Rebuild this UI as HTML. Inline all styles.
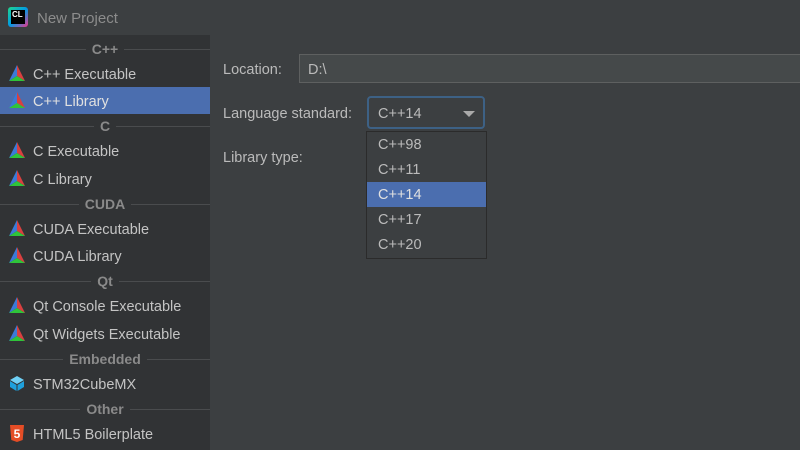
<!DOCTYPE html>
<html><head><style>
*{margin:0;padding:0;box-sizing:border-box}
body{width:800px;height:450px;background:#3c3f41;font-family:"Liberation Sans","DejaVu Sans",sans-serif;color:#bbbbbb;position:relative;overflow:hidden;font-size:14px}
.abs{position:absolute}
#side{left:0;top:35px;width:210px;height:415px;background:#313335}
.hdr{position:absolute;left:0;width:210px;height:20px;text-align:center;font-weight:bold;color:#8a8a8a;font-size:14px;line-height:22px}
.hdr:before{content:"";position:absolute;left:0;right:0;top:11px;border-top:1px solid #4a4c4e}
.hdr span{position:relative;background:#313335;padding:0 6px}
.item{position:absolute;left:0;width:210px;height:27px;line-height:30px;padding-left:33px;font-size:14.5px;color:#c4c4c4}
.item.sel{background:#4b6eaf;color:#e0e0e0}
.item svg{position:absolute;left:9px;top:5px}
.dd div{height:25px;line-height:27px;padding-left:11px}
</style></head><body>
<div class="abs" style="left:8px;top:7px;width:20px;height:20px;border-radius:3px;background:linear-gradient(135deg,#21d789,#009ae5 50%,#ed358c)"></div>
<div class="abs" style="left:11px;top:10px;width:14px;height:14px;background:#000;color:#fff;font-size:8px;font-weight:bold;line-height:9px;padding-left:1px">CL</div>
<div class="abs" style="left:37px;top:10px;font-size:15px;color:#8c8c8c">New Project</div>
<div id="side" class="abs">
<div class="hdr" style="top:3px"><span>C++</span></div>
<div class="item" style="top:25px"><svg width="16" height="17" viewBox="0 0 16 17"><path d="M8 0L0 16L8 11Z" fill="#3b7ad8"/><path d="M8 0L16 16L8 11Z" fill="#d84040"/><path d="M0 16L8 11L16 16Z" fill="#2fc43a"/></svg>C++ Executable</div>
<div class="item sel" style="top:52px"><svg width="16" height="17" viewBox="0 0 16 17"><path d="M8 0L0 16L8 11Z" fill="#3b7ad8"/><path d="M8 0L16 16L8 11Z" fill="#d84040"/><path d="M0 16L8 11L16 16Z" fill="#2fc43a"/></svg>C++ Library</div>
<div class="hdr" style="top:80px"><span>C</span></div>
<div class="item" style="top:102px"><svg width="16" height="17" viewBox="0 0 16 17"><path d="M8 0L0 16L8 11Z" fill="#3b7ad8"/><path d="M8 0L16 16L8 11Z" fill="#d84040"/><path d="M0 16L8 11L16 16Z" fill="#2fc43a"/></svg>C Executable</div>
<div class="item" style="top:130px"><svg width="16" height="17" viewBox="0 0 16 17"><path d="M8 0L0 16L8 11Z" fill="#3b7ad8"/><path d="M8 0L16 16L8 11Z" fill="#d84040"/><path d="M0 16L8 11L16 16Z" fill="#2fc43a"/></svg>C Library</div>
<div class="hdr" style="top:158px"><span>CUDA</span></div>
<div class="item" style="top:180px"><svg width="16" height="17" viewBox="0 0 16 17"><path d="M8 0L0 16L8 11Z" fill="#3b7ad8"/><path d="M8 0L16 16L8 11Z" fill="#d84040"/><path d="M0 16L8 11L16 16Z" fill="#2fc43a"/></svg>CUDA Executable</div>
<div class="item" style="top:207px"><svg width="16" height="17" viewBox="0 0 16 17"><path d="M8 0L0 16L8 11Z" fill="#3b7ad8"/><path d="M8 0L16 16L8 11Z" fill="#d84040"/><path d="M0 16L8 11L16 16Z" fill="#2fc43a"/></svg>CUDA Library</div>
<div class="hdr" style="top:235px"><span>Qt</span></div>
<div class="item" style="top:257px"><svg width="16" height="17" viewBox="0 0 16 17"><path d="M8 0L0 16L8 11Z" fill="#3b7ad8"/><path d="M8 0L16 16L8 11Z" fill="#d84040"/><path d="M0 16L8 11L16 16Z" fill="#2fc43a"/></svg>Qt Console Executable</div>
<div class="item" style="top:285px"><svg width="16" height="17" viewBox="0 0 16 17"><path d="M8 0L0 16L8 11Z" fill="#3b7ad8"/><path d="M8 0L16 16L8 11Z" fill="#d84040"/><path d="M0 16L8 11L16 16Z" fill="#2fc43a"/></svg>Qt Widgets Executable</div>
<div class="hdr" style="top:313px"><span>Embedded</span></div>
<div class="item" style="top:335px"><svg width="16" height="17" viewBox="0 0 16 17"><path d="M8 1L15 5L8 9L1 5Z" fill="#6fd0f5"/><path d="M1 6L7.5 10V16L1 12Z" fill="#1ea0dc"/><path d="M15 6L8.5 10V16L15 12Z" fill="#1ea0dc"/></svg>STM32CubeMX</div>
<div class="hdr" style="top:363px"><span>Other</span></div>
<div class="item" style="top:385px"><svg width="16" height="17" viewBox="0 0 16 17"><path d="M1 0H15L13.7 15L8 17L2.3 15Z" fill="#e44d26"/><text x="8" y="13" font-size="12" font-weight="bold" fill="#fff" text-anchor="middle" font-family="Liberation Sans">5</text></svg>HTML5 Boilerplate</div>
</div>
<div class="abs" style="left:223px;top:62px;font-size:14.5px">Location:</div>
<div class="abs" style="left:299px;top:54px;width:501px;height:29px;background:#45494a;border:1px solid #5e6060;border-right:none;padding:7px 8px;font-size:14.5px;color:#bbb">D:\</div>
<div class="abs" style="left:223px;top:106px;font-size:14.5px">Language standard:</div>
<div class="abs" style="left:367px;top:96px;width:118px;height:33px;border:2px solid #3d6185;border-radius:4px;background:#3c3f41;padding:8px 9px;font-size:14.5px">C++14<span style="position:absolute;left:94px;top:13px;border-left:6px solid transparent;border-right:6px solid transparent;border-top:6px solid #aaa"></span></div>
<div class="abs" style="left:223px;top:150px;font-size:14.5px">Library type:</div>
<div class="abs dd" style="left:366px;top:131px;width:121px;height:128px;background:#3c3f41;border:1px solid #2b2b2b;font-size:14.5px">
<div>C++98</div>
<div>C++11</div>
<div style="background:#4b6eaf;color:#e0e0e0">C++14</div>
<div>C++17</div>
<div>C++20</div>
</div>
</body></html>
